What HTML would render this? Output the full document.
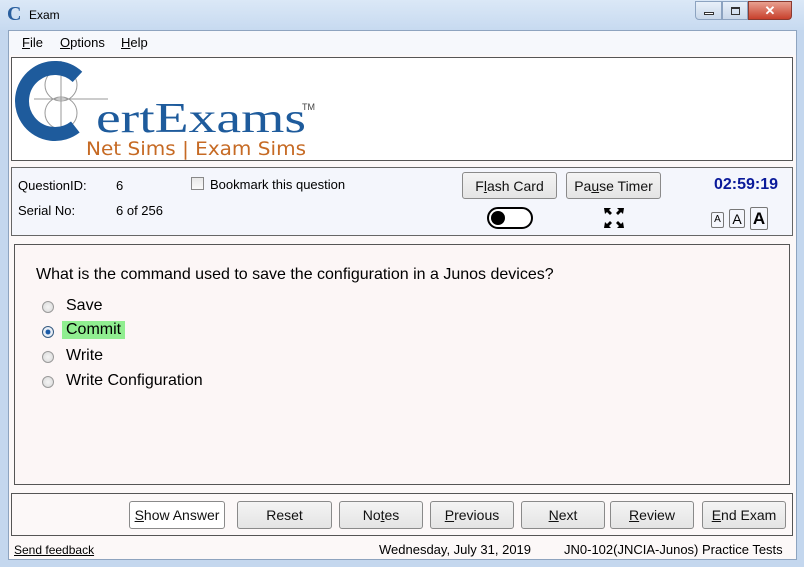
<!DOCTYPE html>
<html><head><style>
*{margin:0;padding:0;box-sizing:border-box}
body{width:804px;height:567px;overflow:hidden;background:#c4d7ee;font-family:"Liberation Sans",sans-serif;font-size:13px;color:#000;position:relative}
.a{position:absolute}
.btn{position:absolute;background:linear-gradient(#f4f4f4,#e4e4e4);border:1px solid #8a8a8a;border-radius:3px;text-align:center;font-size:14px;color:#111;line-height:26px;height:28px}
.rad{position:absolute;width:12px;height:12px;border-radius:50%;border:1px solid #9a9a9a;background:radial-gradient(#f4f4f4,#d8d8d8)}
.opt{position:absolute;left:66px;font-size:16px}
</style></head><body>
<div class="a" style="left:0;top:0;width:804px;height:30px;background:linear-gradient(#dbe8f7,#c7daf0)"></div>
<div class="a" style="left:7px;top:3px;font:bold 20px 'Liberation Serif',serif;color:#2a5f9e">C</div>
<div class="a" style="left:29px;top:8px;font-size:12px">Exam</div>
<div class="a" style="left:695px;top:1px;width:27px;height:19px;border:1px solid #8ca3c0;border-radius:0 0 0 4px;background:linear-gradient(#e8f0f9,#c9d8ea)"><div class="a" style="left:8px;top:10px;width:10px;height:3px;border:1px solid #333;background:#fff"></div></div>
<div class="a" style="left:722px;top:1px;width:26px;height:19px;border:1px solid #8ca3c0;background:linear-gradient(#e8f0f9,#c9d8ea)"><div class="a" style="left:8px;top:5px;width:9px;height:8px;border:1px solid #333;border-top-width:2px"></div></div>
<div class="a" style="left:748px;top:1px;width:44px;height:19px;border:1px solid #8b3a30;border-radius:0 0 4px 0;background:linear-gradient(#e8a090,#c8402c);color:#fff;font-weight:bold;text-align:center;font-size:13px;line-height:17px">✕</div>
<div class="a" style="left:8px;top:30px;width:789px;height:530px;background:#fcf8f8;border:1px solid #8ea4bf"></div>
<div class="a" style="left:9px;top:31px;width:787px;height:24px;background:#f6f8fc"></div>
<div class="a" style="left:22px;top:35px"><u>F</u>ile</div>
<div class="a" style="left:60px;top:35px"><u>O</u>ptions</div>
<div class="a" style="left:121px;top:35px"><u>H</u>elp</div>
<div class="a" style="left:11px;top:57px;width:782px;height:104px;background:#fff;border:1px solid #555"></div>
<svg class="a" style="left:12px;top:58px" width="320" height="102">
<circle cx="49" cy="27" r="16" fill="none" stroke="#999" stroke-width="1"/>
<circle cx="49" cy="55" r="16" fill="none" stroke="#999" stroke-width="1"/>
<line x1="49" y1="3" x2="49" y2="82" stroke="#999"/><line x1="22" y1="41" x2="96" y2="41" stroke="#999"/>
<circle cx="43" cy="43" r="33" fill="none" stroke="#1e5b9c" stroke-width="14" stroke-dasharray="150 57.3" transform="rotate(52 43 43)"/>
<text x="84" y="74" font-family="Liberation Serif,serif" font-size="42" fill="#1e5b9c" textLength="210" lengthAdjust="spacingAndGlyphs">ertExams</text>
<text x="290" y="52" font-family="Liberation Sans,sans-serif" font-size="9" fill="#444">TM</text>
<text x="74" y="97" font-family="DejaVu Sans,sans-serif" font-size="19" fill="#c66a24" textLength="220" lengthAdjust="spacingAndGlyphs">Net Sims | Exam Sims</text>
</svg>
<div class="a" style="left:11px;top:167px;width:782px;height:69px;background:#f4f6fc;border:1px solid #666"></div>
<div class="a" style="left:18px;top:178px">QuestionID:</div><div class="a" style="left:116px;top:178px">6</div>
<div class="a" style="left:18px;top:203px">Serial No:</div><div class="a" style="left:116px;top:203px">6 of 256</div>
<div class="a" style="left:191px;top:177px;width:13px;height:13px;border:1px solid #888;background:linear-gradient(#e8e8e8,#fafafa)"></div>
<div class="a" style="left:210px;top:177px">Bookmark this question</div>
<div class="btn" style="left:462px;top:172px;width:95px;height:27px">F<u>l</u>ash Card</div>
<div class="btn" style="left:566px;top:172px;width:95px;height:27px">Pa<u>u</u>se Timer</div>
<div class="a" style="left:714px;top:176px;font-size:16px;font-weight:bold;color:#0a1a9a">02:59:19</div>
<div class="a" style="left:487px;top:207px;width:46px;height:22px;border:2px solid #000;border-radius:11px;background:#fff"><div class="a" style="left:2px;top:2px;width:14px;height:14px;border-radius:50%;background:#000"></div></div>
<svg class="a" style="left:603px;top:207px" width="22" height="22" fill="#000">
<path d="M1 1h7l-2 2 3 3-2 2-3-3-2 2z"/><path d="M21 1h-7l2 2-3 3 2 2 3-3 2 2z"/>
<path d="M1 21h7l-2-2 3-3-2-2-3 3-2-2z"/><path d="M21 21h-7l2-2-3-3 2-2 3 3 2-2z"/>
</svg>
<div class="a" style="left:711px;top:212px;width:13px;height:16px;border:1px solid #777;border-radius:2px;font-size:10px;text-align:center;line-height:14px">A</div>
<div class="a" style="left:729px;top:209px;width:16px;height:19px;border:1px solid #777;border-radius:2px;font-size:14px;text-align:center;line-height:18px">A</div>
<div class="a" style="left:750px;top:207px;width:18px;height:23px;border:1px solid #777;border-radius:2px;font-size:17px;font-weight:bold;text-align:center;line-height:22px">A</div>
<div class="a" style="left:14px;top:244px;width:776px;height:241px;border:1px solid #555;background:#fcf6f6"></div>
<div class="a" style="left:36px;top:266px;font-size:16px">What is the command used to save the configuration in a Junos devices?</div>
<div class="rad" style="left:42px;top:301px"></div><div class="opt" style="top:297px">Save</div>
<div class="rad" style="left:42px;top:326px;border-color:#355a80;background:radial-gradient(#1a5aa8 30%,#e8eef6 40%)"></div><div class="opt" style="top:321px;left:62px;background:#90ee90;padding:0 4px">Commit</div>
<div class="rad" style="left:42px;top:351px"></div><div class="opt" style="top:347px">Write</div>
<div class="rad" style="left:42px;top:376px"></div><div class="opt" style="top:372px">Write Configuration</div>
<div class="a" style="left:11px;top:493px;width:782px;height:43px;border:1px solid #555;background:#fcf8f8"></div>
<div class="btn" style="left:129px;top:501px;width:96px;background:#fff"><u>S</u>how Answer</div>
<div class="btn" style="left:237px;top:501px;width:95px">Reset</div>
<div class="btn" style="left:339px;top:501px;width:84px">No<u>t</u>es</div>
<div class="btn" style="left:430px;top:501px;width:84px"><u>P</u>revious</div>
<div class="btn" style="left:521px;top:501px;width:84px"><u>N</u>ext</div>
<div class="btn" style="left:610px;top:501px;width:84px"><u>R</u>eview</div>
<div class="btn" style="left:702px;top:501px;width:84px"><u>E</u>nd Exam</div>
<div class="a" style="left:14px;top:543px;font-size:12px;text-decoration:underline">Send feedback</div>
<div class="a" style="left:379px;top:542px;font-size:13px">Wednesday, July 31, 2019</div>
<div class="a" style="left:564px;top:542px;font-size:13px">JN0-102(JNCIA-Junos) Practice Tests</div>
</body></html>
